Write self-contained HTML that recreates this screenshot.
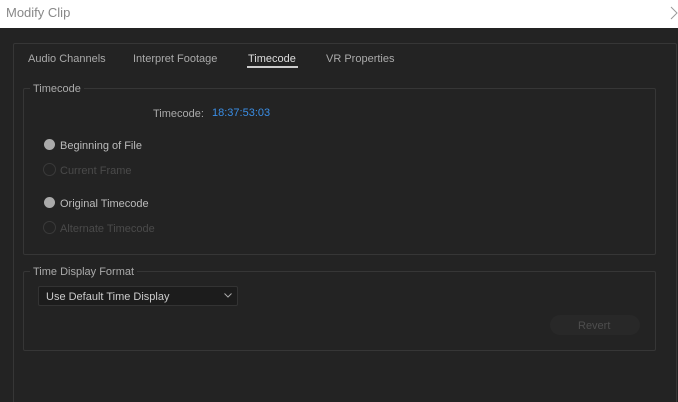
<!DOCTYPE html><html><head><style>
html,body{margin:0;width:678px;height:402px;overflow:hidden;background:#232323}
body{font-family:"Liberation Sans",sans-serif;font-size:11px;position:relative}
.t{position:absolute;white-space:nowrap}
.box{position:absolute;border:1px solid #363636;border-radius:2px}
.rad{position:absolute;width:11px;height:11px;border-radius:50%}
</style></head><body>
<div style="position:absolute;left:0;top:0;width:678px;height:28px;background:#fff"></div>
<div class="t" style="left:6px;top:5px;font-size:13px;color:#888">Modify Clip</div>
<svg style="position:absolute;left:670px;top:6px" width="8" height="14"><path d="M1 1L7 7L1 13" stroke="#999" fill="none"/></svg>
<div class="box" style="left:13px;top:43px;width:662px;height:370px"></div>
<div class="t" style="left:28px;top:53px;color:#aaa">Audio Channels</div>
<div class="t" style="left:133px;top:53px;color:#aaa">Interpret Footage</div>
<div class="t" style="left:248px;top:53px;color:#ddd">Timecode</div>
<div style="position:absolute;left:247px;top:66px;width:51px;height:2px;background:#ccc"></div>
<div class="t" style="left:326px;top:53px;color:#aaa">VR Properties</div>
<div class="box" style="left:23px;top:88px;width:631px;height:165px"></div>
<div class="t" style="left:30px;top:83px;background:#232323;padding:0 3px;color:#aaa">Timecode</div>
<div class="t" style="left:153px;top:108px;color:#aaa">Timecode:</div>
<div class="t" style="left:212px;top:107px;color:#3a8ee6">18:37:53:03</div>
<div class="rad" style="left:44px;top:139px;background:#aaa"></div>
<div class="t" style="left:60px;top:140px;color:#bbb">Beginning of File</div>
<div class="rad" style="left:43px;top:163px;border:1px solid #3a3a3a"></div>
<div class="t" style="left:60px;top:165px;color:#4a4a4a">Current Frame</div>
<div class="rad" style="left:44px;top:197px;background:#aaa"></div>
<div class="t" style="left:60px;top:198px;color:#bbb">Original Timecode</div>
<div class="rad" style="left:43px;top:221px;border:1px solid #3a3a3a"></div>
<div class="t" style="left:60px;top:223px;color:#4a4a4a">Alternate Timecode</div>
<div class="box" style="left:23px;top:271px;width:631px;height:78px"></div>
<div class="t" style="left:30px;top:266px;background:#232323;padding:0 3px;color:#aaa">Time Display Format</div>
<div style="position:absolute;left:38px;top:286px;width:198px;height:18px;background:#1c1c1c;border:1px solid #333;border-radius:2px"></div>
<div class="t" style="left:46px;top:291px;color:#ccc">Use Default Time Display</div>
<svg style="position:absolute;left:224px;top:293px" width="8" height="5"><path d="M0.5 0.5L4 4L7.5 0.5" stroke="#aaa" fill="none"/></svg>
<div style="position:absolute;left:550px;top:315px;width:90px;height:20px;background:#282828;border-radius:10px"></div>
<div class="t" style="left:578px;top:320px;color:#4e4e4e">Revert</div>
</body></html>
